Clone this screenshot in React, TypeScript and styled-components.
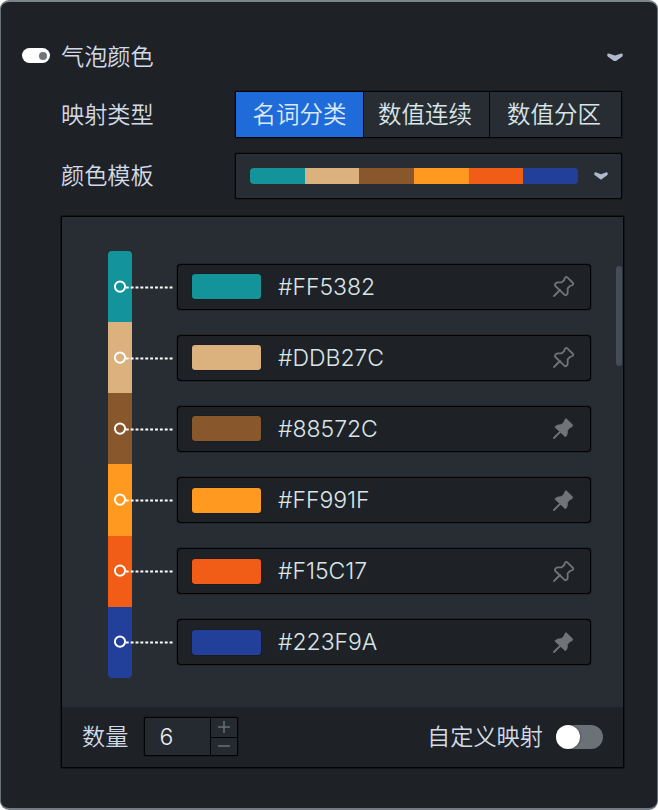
import React from 'react';
import styled, { createGlobalStyle } from 'styled-components';

const GlobalStyle = createGlobalStyle`
  * { box-sizing: border-box; }
  body {
    margin: 0;
    background: #fff;
    font-family: Inter, "Noto Sans CJK SC", sans-serif;
    font-weight: 350;
    font-size: 23.2px;
    line-height: 1;
    color: #d2dbe8;
  }
`;

const Panel = styled.main`
  width: 658px;
  height: 810px;
  padding: 31px 33px 0 20px;
  border: 1px solid #687078;
  border-top: 2px solid #7b8487;
  border-bottom: 2px solid #747a84;
  border-radius: 9px;
  background: #1e2125;
`;

const Header = styled.header`
  display: flex;
  align-items: center;
  height: 48px;
  padding-right: 1px;
`;

const EnableSwitch = styled.button`
  display: flex;
  align-items: center;
  justify-content: flex-end;
  width: 28px;
  height: 15px;
  margin: -3px 11px 0 1px;
  padding: 0 3px 0 0;
  border: 0;
  border-radius: 8px;
  background: #fff;

  &::after {
    content: '';
    width: 8px;
    height: 8px;
    border-radius: 50%;
    background: #70757b;
  }
`;

const Title = styled.h1`
  flex: 1;
  margin: 0;
  padding-top: 2px;
  font-size: inherit;
  font-weight: inherit;
`;

const Caret = styled.svg<{ $size: number }>`
  display: block;
  width: ${(p) => p.$size}px;
  height: ${(p) => p.$size * 0.56}px;
  fill: #aeb9cb;
`;

const SettingRow = styled.div<{ $top: number; $height: number }>`
  display: flex;
  align-items: center;
  height: ${(p) => p.$height}px;
  margin-top: ${(p) => p.$top}px;
  padding-left: 40px;
`;

const SettingLabel = styled.span`
  width: 174px;
  padding-top: 2px;
`;

const frame = `
  border: 1px solid #030405;
  box-shadow: 0 0 1px #000, 0 0 1px #000;
`;

const Segmented = styled.div`
  ${frame}
  display: grid;
  grid-template-columns: 127px 126px 1fr;
  width: 387px;
  height: 100%;
  border-radius: 2px;
`;

const Segment = styled.button<{ $active?: boolean }>`
  padding: 1px ${(p) => (p.$active ? 0 : 3)}px 0 0;
  border: 0;
  border-left: ${(p) => (p.$active ? 0 : '1px solid #030405')};
  background: ${(p) => (p.$active ? '#1f6bd9' : '#282d33')};
  color: ${(p) => (p.$active ? '#dceaf8' : '#d9e6e8')};
  font: inherit;
  font-size: 23.5px;
`;

const TemplateSelect = styled.div`
  ${frame}
  display: flex;
  align-items: center;
  justify-content: space-between;
  width: 387px;
  height: 100%;
  padding: 0 13px 0 14px;
  border-radius: 2px;
  background: #282d34;
`;

const Palette = styled.div`
  display: flex;
  width: 328px;
  height: 16px;
  overflow: hidden;
  border-radius: 4px;
`;

const PaletteColor = styled.span<{ $color: string }>`
  flex: 1;
  background: ${(p) => p.$color};
`;

const Mapping = styled.section`
  ${frame}
  display: flex;
  flex-direction: column;
  width: 563px;
  height: 552px;
  margin: 17px 0 0 40px;
`;

const MappingBody = styled.div`
  display: flex;
  flex: 1;
  justify-content: space-between;
  padding: 34px 1px 0 46px;
  background: #282d34;
`;

const ColorList = styled.div`
  display: grid;
  grid-template-rows: repeat(6, 1fr);
  width: 483px;
  height: 427px;
`;

const ColorRow = styled.div`
  display: grid;
  grid-template-columns: 24px 45px 414px;
  align-items: center;

  &:first-child > :first-child { border-radius: 4px 4px 0 0; }
  &:last-child > :first-child { border-radius: 0 0 4px 4px; }
`;

const StripBlock = styled.span<{ $color: string }>`
  align-self: stretch;
  display: flex;
  align-items: center;
  background: ${(p) => p.$color};
`;

const Connector = styled.svg`
  flex: none;
  width: 68px;
  height: 14px;
  overflow: visible;
`;

const ColorField = styled.div`
  ${frame}
  grid-column: 3;
  display: flex;
  align-items: center;
  height: 46px;
  padding: 0 14px 0 14px;
  border-radius: 4px;
  background: #1e2125;
`;

const Swatch = styled.span<{ $color: string }>`
  width: 69px;
  height: 25px;
  margin-right: 17px;
  border-radius: 3px;
  background: ${(p) => p.$color};
  box-shadow: 0 0 1px #000;
`;

const Hex = styled.span`
  flex: 1;
  padding-top: 1px;
  color: #d9e6e9;
  font-size: 23px;
  font-weight: 300;
  letter-spacing: -0.05px;
`;

const Pin = styled.svg`
  width: 25px;
  height: 25px;
  fill: none;
  stroke: #717477;
  stroke-width: 5.4;
  stroke-linecap: round;
  stroke-linejoin: round;
`;

const ScrollThumb = styled.span`
  width: 6px;
  height: 100px;
  margin-top: 15px;
  border-radius: 3px;
  background: #434c58;
`;

const Footer = styled.footer`
  display: flex;
  align-items: center;
  height: 60px;
  padding: 0 20px;
  background: #1e2125;
`;

const FooterLabel = styled.span`
  padding-top: 2px;
`;

const CountInput = styled.div`
  ${frame}
  display: grid;
  grid-template-columns: 1fr 27px;
  width: 94px;
  height: 39px;
  margin: -1px auto 0 16px;
  border-radius: 2px;
  background: #252a30;
`;

const CountValue = styled.span`
  display: flex;
  align-items: center;
  padding: 2px 0 0 14px;
  color: #e6eef1;
  font-size: 23px;
`;

const Stepper = styled.div`
  display: grid;
  grid-template-rows: 1fr 1fr;
  border-left: 1px solid #030405;
`;

const StepButton = styled.button`
  display: flex;
  align-items: center;
  justify-content: center;
  padding: 0;
  border: 0;
  background: none;
  & + & { border-top: 1px solid #030405; }
`;

const StepIcon = styled.svg`
  width: 12px;
  height: 12px;
  stroke: #687075;
  stroke-width: 1.5;
`;

const CustomSwitch = styled.button`
  width: 47px;
  height: 24px;
  margin-left: 13px;
  padding: 0;
  border: 0;
  border-radius: 12px;
  background: #6c7177;

  &::before {
    content: '';
    display: block;
    width: 24px;
    height: 24px;
    border-radius: 50%;
    background: #fff;
    box-shadow: 0 0 2px #222;
  }
`;

const colors = [
  { fill: '#13939a', hex: '#FF5382', pinned: false },
  { fill: '#dbb17d', hex: '#DDB27C', pinned: false },
  { fill: '#88572c', hex: '#88572C', pinned: true },
  { fill: '#ff991f', hex: '#FF991F', pinned: true },
  { fill: '#f15c17', hex: '#F15C17', pinned: false },
  { fill: '#223f9a', hex: '#223F9A', pinned: true },
];

const CaretDown = ({ size }: { size: number }) => (
  <Caret $size={size} viewBox="0 0 16 9">
    <path d="M1.8.4Q0 .2.2 2.2L.6 3.5 8 8.8l7.4-5.3.4-1.3Q16 .2 14.2.4L8 2.6Z" />
  </Caret>
);

const PinIcon = ({ pinned }: { pinned: boolean }) => (
  <Pin viewBox="0 0 75 75">
    {pinned ? (
      <path
        fill="#717477"
        strokeWidth="4"
        d="M45 9 64 28Q63 33 57 33L48 43Q50 54 43 61L13 33Q20 26 32 27L40 19Q41 12 45 9Z"
      />
    ) : (
      <path d="M43 10Q46 7 49 10L66 27Q68 31 65 33Q61 35 57 36L50 43V57Q50 60 46 63Q43 65 40 62L13 36Q10 33 13 29Q16 26 20 25H32L40 18Q40 13 43 10Z" />
    )}
    <path d="M27 48 9 66" />
  </Pin>
);

export default function App() {
  return (
    <>
      <GlobalStyle />
      <Panel>
        <Header>
          <EnableSwitch aria-label="气泡颜色" />
          <Title>气泡颜色</Title>
          <CaretDown size={16} />
        </Header>
        <SettingRow $top={10} $height={47}>
          <SettingLabel>映射类型</SettingLabel>
          <Segmented>
            <Segment $active>名词分类</Segment>
            <Segment>数值连续</Segment>
            <Segment>数值分区</Segment>
          </Segmented>
        </SettingRow>
        <SettingRow $top={15} $height={46}>
          <SettingLabel>颜色模板</SettingLabel>
          <TemplateSelect>
            <Palette>
              {colors.map((c) => <PaletteColor key={c.hex} $color={c.fill} />)}
            </Palette>
            <CaretDown size={14} />
          </TemplateSelect>
        </SettingRow>
        <Mapping>
          <MappingBody>
            <ColorList>
              {colors.map((c) => (
                <ColorRow key={c.hex}>
                  <StripBlock $color={c.fill}>
                    <Connector viewBox="0 0 68 14" fill="none" stroke="#fff">
                      <circle cx="12" cy="6.6" r="5.1" strokeWidth="1.9" />
                      <path d="M17 7.5h48" strokeWidth="2" strokeDasharray="2.9 1.97" strokeDashoffset="-.8" />
                    </Connector>
                  </StripBlock>
                  <ColorField>
                    <Swatch $color={c.fill} />
                    <Hex>{c.hex}</Hex>
                    <PinIcon pinned={c.pinned} />
                  </ColorField>
                </ColorRow>
              ))}
            </ColorList>
            <ScrollThumb />
          </MappingBody>
          <Footer>
            <FooterLabel>数量</FooterLabel>
            <CountInput>
              <CountValue>6</CountValue>
              <Stepper>
                <StepButton aria-label="+"><StepIcon viewBox="0 0 12 12"><path d="M0 6h12M6 0v12" /></StepIcon></StepButton>
                <StepButton aria-label="−"><StepIcon viewBox="0 0 12 12"><path d="M0 6h12" /></StepIcon></StepButton>
              </Stepper>
            </CountInput>
            <FooterLabel>自定义映射</FooterLabel>
            <CustomSwitch aria-label="自定义映射" />
          </Footer>
        </Mapping>
      </Panel>
    </>
  );
}
